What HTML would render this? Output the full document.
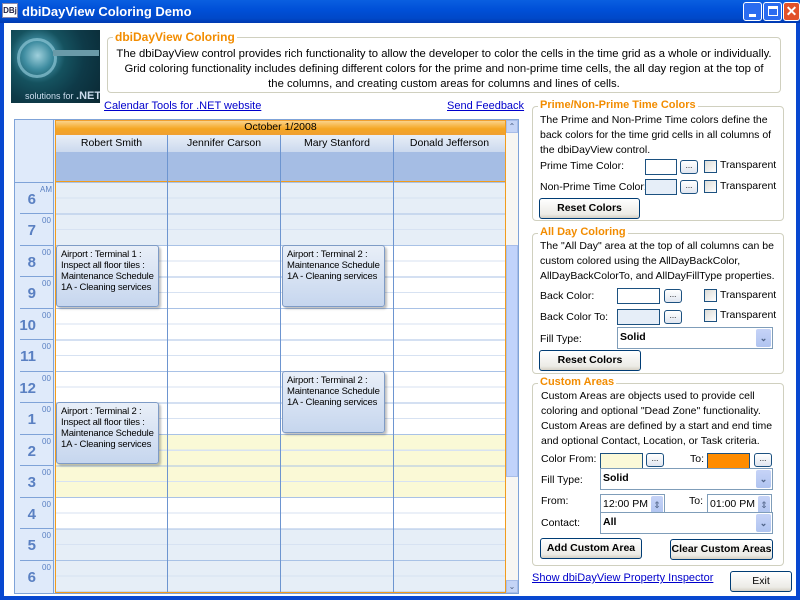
<!DOCTYPE html>
<html><head><meta charset="utf-8"><style>
*{margin:0;padding:0;box-sizing:border-box}
body{width:800px;height:600px;position:relative;overflow:hidden;font-family:"Liberation Sans",sans-serif;background:#fff}
.a{position:absolute;white-space:nowrap}
.gb{position:absolute;border:1px solid #d0d0bf;border-radius:4px}
.gl{position:absolute;top:-8px;left:5px;background:#fff;color:#f28c00;font-size:11px;padding:0 2px;font-weight:bold;white-space:nowrap}
.p{font-size:10.5px;line-height:15px;color:#000}
.btn{position:absolute;border:1px solid #003c74;border-radius:3px;background:linear-gradient(#fff,#ecebe6 80%,#d6d0c5);font-size:10.5px;font-weight:bold;text-align:center;color:#000;white-space:nowrap}
.cb{position:absolute;width:13px;height:13px;border:1px solid #1c5180;background:linear-gradient(135deg,#dcdcd7,#fff)}
.sw{position:absolute;height:16px;border:1px solid #1c5180}
.dot{position:absolute;width:18px;height:14px;border:1px solid #1c5180;border-radius:3px;background:linear-gradient(#fff,#e0e6f0);font-size:8px;text-align:center;line-height:10px}
.dd{position:absolute;height:22px;border:1px solid #7f9db9;background:#fff;font-size:10.5px;font-weight:bold;padding:3px 2px;white-space:nowrap}
.dd i{position:absolute;right:1px;top:1px;width:15px;height:18px;background:linear-gradient(#c6d3f7,#b0c4f0);border-radius:2px;font-style:normal;color:#4d6185;font-size:9px;text-align:center;line-height:18px}
.appt{position:absolute;border:1px solid #7e9bc6;border-radius:3px;background:linear-gradient(#e9eff8,#c6d6ee);box-shadow:2px 2px 2px rgba(0,0,0,.25);font-size:9.5px;line-height:11px;padding:3px 4px;white-space:nowrap;overflow:hidden;letter-spacing:-.2px}
.hr{position:absolute;left:20px;width:33px;height:1px;background:#7fa3d8}
.hn{position:absolute;font-size:15px;font-weight:bold;color:#5a80c2;text-align:right;width:22px;left:14px}
.mn{position:absolute;left:42px;font-size:8px;color:#5a80c2}
.vl{position:absolute;top:135px;width:1px;height:457px;background:#6d95d0}
.nm{position:absolute;top:135px;height:17px;font-size:10.5px;text-align:center;line-height:17px;background:linear-gradient(#e8eef7,#cbd9ee)}
.lk{font-size:11px;color:#00c;text-decoration:underline}
</style></head><body>
<div class="a" style="left:0;top:0;width:800px;height:23px;background:linear-gradient(#0a5fe0,#0050d8 40%,#0048c8 80%,#0038b0)"></div>
<div class="a" style="left:2px;top:3px;width:16px;height:15px;background:#fff;border:1px solid #88a;font-size:8px;font-weight:bold;color:#224;line-height:13px;text-align:center">DBj</div>
<div class="a" style="left:22px;top:4px;color:#fff;font-weight:bold;font-size:13px">dbiDayView Coloring Demo</div>
<div class="a" style="left:743px;top:2px;width:19px;height:19px;border:1px solid #fff;border-radius:3px;background:#2a6cf0"><div class="a" style="left:5px;top:11px;width:7px;height:3px;background:#fff"></div></div>
<div class="a" style="left:763px;top:2px;width:19px;height:19px;border:1px solid #fff;border-radius:3px;background:#2a6cf0"><div class="a" style="left:4px;top:3px;width:10px;height:10px;border:1px solid #fff;border-top-width:3px"></div></div>
<div class="a" style="left:783px;top:2px;width:17px;height:19px;border:1px solid #fff;border-radius:3px;background:#e2512a;color:#fff;font-weight:bold;font-size:14px;text-align:center;line-height:17px">✕</div>
<div class="a" style="left:0;top:23px;width:4px;height:577px;background:#0848d0"></div>
<div class="a" style="left:796px;top:23px;width:4px;height:577px;background:#0848d0"></div>
<div class="a" style="left:0;top:596px;width:800px;height:4px;background:#0848d0"></div>

<div class="a" style="left:11px;top:30px;width:89px;height:73px;overflow:hidden;background:radial-gradient(circle at 30% 35%,#9fd0dc 0,#3e8ca0 18%,#15525f 35%,#0e3a48 60%,#0a2833 100%)">
<div class="a" style="left:6px;top:8px;width:40px;height:40px;border:3px solid #8cc4d4;border-radius:50%;opacity:.7"></div>
<div class="a" style="left:42px;top:20px;width:46px;height:6px;background:#6a9aa8"></div>
<div class="a" style="left:14px;top:60px;font-size:9px;color:#cde">solutions for <b style="font-size:11px">.NET</b></div></div>

<div class="gb" style="left:107px;top:37px;width:674px;height:56px"><div class="gl" style="font-size:12px">dbiDayView Coloring</div></div>
<div class="a" style="left:110px;top:47px;width:668px;text-align:center;font-size:11.3px;line-height:15px;white-space:normal">The dbiDayView control provides rich functionality to allow the developer to color the cells in the time grid as a whole or individually.<br>Grid coloring functionality includes defining different colors for the prime and non-prime time cells, the all day region at the top of<br>the columns, and creating custom areas for columns and lines of cells.</div>
<div class="a lk" style="left:104px;top:100px">Calendar Tools for .NET website</div>
<div class="a lk" style="left:447px;top:100px">Send Feedback</div>

<div class="a" style="left:14px;top:119px;width:505px;height:475px;border:1px solid #7fa3d8;background:#e3edfa"></div>
<div class="a" style="left:55px;top:120px;width:451px;height:15px;background:linear-gradient(#fbd38a,#f5a623 60%,#f0a030);border:1px solid #f0a030;font-size:10.5px;text-align:center;line-height:13px">October 1/2008</div>
<div class="nm" style="left:56px;width:111px">Robert Smith</div>
<div class="nm" style="left:168px;width:112px">Jennifer Carson</div>
<div class="nm" style="left:281px;width:112px">Mary Stanford</div>
<div class="nm" style="left:394px;width:111px">Donald Jefferson</div>
<div class="a" style="left:56px;top:152px;width:449px;height:30px;background:#a5bde4"></div>
<div class="a" style="left:55px;top:181px;width:451px;height:2px;background:#f29c1c"></div>
<div class="a" style="left:56px;top:183px;width:449px;height:62px;background:#e6eef7"></div>
<div class="a" style="left:56px;top:245px;width:449px;height:189px;background:#fff"></div>
<div class="a" style="left:56px;top:434px;width:449px;height:63px;background:#faf9d6"></div>
<div class="a" style="left:56px;top:497px;width:449px;height:32px;background:#fff"></div>
<div class="a" style="left:56px;top:529px;width:449px;height:63px;background:#e6eef7"></div>
<div class="a" style="left:56px;top:182px;width:449px;height:410px;background:repeating-linear-gradient(to bottom,#a9c2e6 0,#a9c2e6 1px,transparent 1px,transparent 15.75px,#d7e2f2 15.75px,#d7e2f2 16.75px,transparent 16.75px,transparent 31.5px)"></div>
<div class="vl" style="left:167px"></div><div class="vl" style="left:280px"></div><div class="vl" style="left:393px"></div>
<div class="a" style="left:55px;top:120px;width:1px;height:473px;background:#f29c1c"></div>
<div class="a" style="left:505px;top:120px;width:1px;height:473px;background:#f29c1c"></div>
<div class="a" style="left:55px;top:592px;width:451px;height:1px;background:#f29c1c"></div>
<div class="a" style="left:15px;top:120px;width:39px;height:473px;background:#dfeafa;border-right:1px solid #7fa3d8"></div>
<div class="a" style="left:15px;top:182px;width:39px;height:1px;background:#7fa3d8"></div>
<div class="mn" style="top:185px;left:40px">AM</div><div class="hn" style="top:191px">6</div>
<div class="hr" style="top:213px"></div><div class="mn" style="top:216px">00</div><div class="hn" style="top:222px">7</div>
<div class="hr" style="top:245px"></div><div class="mn" style="top:248px">00</div><div class="hn" style="top:254px">8</div>
<div class="hr" style="top:276px"></div><div class="mn" style="top:279px">00</div><div class="hn" style="top:285px">9</div>
<div class="hr" style="top:308px"></div><div class="mn" style="top:311px">00</div><div class="hn" style="top:317px">10</div>
<div class="hr" style="top:339px"></div><div class="mn" style="top:342px">00</div><div class="hn" style="top:348px">11</div>
<div class="hr" style="top:371px"></div><div class="mn" style="top:374px">00</div><div class="hn" style="top:380px">12</div>
<div class="hr" style="top:402px"></div><div class="mn" style="top:405px">00</div><div class="hn" style="top:411px">1</div>
<div class="hr" style="top:434px"></div><div class="mn" style="top:437px">00</div><div class="hn" style="top:443px">2</div>
<div class="hr" style="top:465px"></div><div class="mn" style="top:468px">00</div><div class="hn" style="top:474px">3</div>
<div class="hr" style="top:497px"></div><div class="mn" style="top:500px">00</div><div class="hn" style="top:506px">4</div>
<div class="hr" style="top:528px"></div><div class="mn" style="top:531px">00</div><div class="hn" style="top:537px">5</div>
<div class="hr" style="top:560px"></div><div class="mn" style="top:563px">00</div><div class="hn" style="top:569px">6</div>
<div class="appt" style="left:56px;top:245px;width:103px;height:62px">Airport : Terminal 1 :<br>Inspect all floor tiles :<br>Maintenance Schedule<br>1A - Cleaning services</div>
<div class="appt" style="left:282px;top:245px;width:103px;height:62px">Airport : Terminal 2 :<br>Maintenance Schedule<br>1A - Cleaning services</div>
<div class="appt" style="left:282px;top:371px;width:103px;height:62px">Airport : Terminal 2 :<br>Maintenance Schedule<br>1A - Cleaning services</div>
<div class="appt" style="left:56px;top:402px;width:103px;height:62px">Airport : Terminal 2 :<br>Inspect all floor tiles :<br>Maintenance Schedule<br>1A - Cleaning services</div>
<div class="a" style="left:506px;top:120px;width:12px;height:473px;background:#f7f6f2"></div>
<div class="a" style="left:506px;top:120px;width:12px;height:13px;background:#c4d4f6;border:1px solid #a8bde8;font-size:8px;text-align:center;color:#4d6185;line-height:11px">⌃</div>
<div class="a" style="left:506px;top:245px;width:12px;height:232px;background:#c1d3fb;border:1px solid #a8bde8"></div>
<div class="a" style="left:506px;top:580px;width:12px;height:13px;background:#c4d4f6;border:1px solid #a8bde8;font-size:8px;text-align:center;color:#4d6185;line-height:11px">⌄</div>

<div class="gb" style="left:532px;top:106px;width:252px;height:115px"><div class="gl">Prime/Non-Prime Time Colors</div></div>
<div class="a p" style="left:540px;top:113px">The Prime and Non-Prime Time colors define the<br>back colors for the time grid cells in all columns of<br>the dbiDayView control.</div>
<div class="a p" style="left:540px;top:159px">Prime Time Color:</div>
<div class="sw" style="left:645px;top:159px;width:32px;background:#fff"></div><div class="dot" style="left:680px;top:160px">...</div>
<div class="cb" style="left:704px;top:160px"></div><div class="a p" style="left:720px;top:158px">Transparent</div>
<div class="a p" style="left:540px;top:180px">Non-Prime Time Color:</div>
<div class="sw" style="left:645px;top:179px;width:32px;background:#e6eef8"></div><div class="dot" style="left:680px;top:180px">...</div>
<div class="cb" style="left:704px;top:180px"></div><div class="a p" style="left:720px;top:179px">Transparent</div>
<div class="btn" style="left:539px;top:198px;width:101px;height:21px;line-height:19px">Reset Colors</div>

<div class="gb" style="left:532px;top:233px;width:252px;height:141px"><div class="gl">All Day Coloring</div></div>
<div class="a p" style="left:540px;top:239px">The "All Day" area at the top of all columns can be<br>custom colored using the AllDayBackColor,<br>AllDayBackColorTo, and AllDayFillType properties.</div>
<div class="a p" style="left:540px;top:289px">Back Color:</div>
<div class="sw" style="left:617px;top:288px;width:43px;background:#fff"></div><div class="dot" style="left:664px;top:289px">...</div>
<div class="cb" style="left:704px;top:289px"></div><div class="a p" style="left:720px;top:288px">Transparent</div>
<div class="a p" style="left:540px;top:310px">Back Color To:</div>
<div class="sw" style="left:617px;top:309px;width:43px;background:#e6eef8"></div><div class="dot" style="left:664px;top:310px">...</div>
<div class="cb" style="left:704px;top:309px"></div><div class="a p" style="left:720px;top:308px">Transparent</div>
<div class="a p" style="left:540px;top:332px">Fill Type:</div>
<div class="dd" style="left:617px;top:327px;width:156px">Solid<i>⌄</i></div>
<div class="btn" style="left:539px;top:350px;width:102px;height:21px;line-height:19px">Reset Colors</div>

<div class="gb" style="left:532px;top:383px;width:252px;height:183px"><div class="gl">Custom Areas</div></div>
<div class="a p" style="left:541px;top:389px">Custom Areas are objects  used to provide cell<br>coloring and optional "Dead Zone" functionality.<br>Custom Areas are defined by a start and end time<br>and optional Contact, Location, or Task criteria.</div>
<div class="a p" style="left:541px;top:452px">Color From:</div>
<div class="sw" style="left:600px;top:453px;width:43px;background:#fbf9d8"></div><div class="dot" style="left:646px;top:453px">...</div>
<div class="a p" style="left:690px;top:452px">To:</div>
<div class="sw" style="left:707px;top:453px;width:43px;background:#ff8c00"></div><div class="dot" style="left:754px;top:453px">...</div>
<div class="a p" style="left:541px;top:473px">Fill Type:</div>
<div class="dd" style="left:600px;top:468px;width:173px">Solid<i>⌄</i></div>
<div class="a p" style="left:541px;top:494px">From:</div>
<div class="dd" style="left:600px;top:494px;width:65px;font-weight:normal;font-size:10.5px">12:00 PM<i style="width:12px">⇕</i></div>
<div class="a p" style="left:689px;top:494px">To:</div>
<div class="dd" style="left:707px;top:494px;width:65px;font-weight:normal;font-size:10.5px">01:00 PM<i style="width:12px">⇕</i></div>
<div class="a p" style="left:541px;top:516px">Contact:</div>
<div class="dd" style="left:600px;top:512px;width:173px">All<i>⌄</i></div>
<div class="btn" style="left:540px;top:538px;width:102px;height:21px;line-height:19px">Add Custom Area</div>
<div class="btn" style="left:670px;top:539px;width:103px;height:21px;line-height:19px">Clear Custom Areas</div>
<div class="a lk" style="left:532px;top:572px">Show dbiDayView Property Inspector</div>
<div class="btn" style="left:730px;top:571px;width:62px;height:21px;line-height:19px;font-weight:normal">Exit</div>
</body></html>
